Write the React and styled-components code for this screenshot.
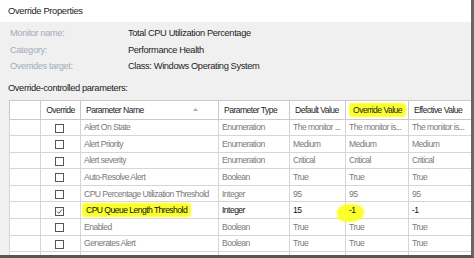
import React from "react";
import styled, { createGlobalStyle } from "styled-components";

const Global = createGlobalStyle`
  html, body { margin: 0; padding: 0; background: #fff; }
  body { font-family: "Liberation Sans", Arial, sans-serif; }
`;

const Window = styled.div`
  width: 474px;
  height: 258px;
  box-sizing: border-box;
  border-right: 3px solid #666;
  border-bottom: 3px solid #555;
  display: flex;
  flex-direction: column;
  overflow: hidden;
  background: #f0f0f0;
`;

const TitleBar = styled.div`
  height: 22px;
  flex: none;
  background: #fff;
  display: flex;
  align-items: center;
  padding: 0 0 2px 8px;
  box-sizing: border-box;
  font-size: 9.4px;
  letter-spacing: -0.35px;
  color: #222;
`;

const Body = styled.div`
  flex: 1;
  display: flex;
  flex-direction: column;
  padding: 3px 0 0 0;
  min-height: 0;
`;

const InfoGrid = styled.div`
  display: grid;
  grid-template-columns: 118px 1fr;
  grid-auto-rows: 16.5px;
  padding-left: 10px;
  align-items: center;
  font-size: 9.3px;
  letter-spacing: -0.38px;
`;

const Label = styled.div`
  color: #a3adbb;
`;

const Value = styled.div`
  color: #1e1e1e;
`;

const Section = styled.div`
  padding: 8px 0 0 8px;
  height: 22px;
  box-sizing: border-box;
  font-size: 9.3px;
  letter-spacing: -0.38px;
  color: #222;
  flex: none;
`;

const TableWrap = styled.div`
  margin: 3px 0 0 9px;
  width: 462px;
  flex: 1;
  min-height: 0;
  overflow: hidden;
`;

const Table = styled.table`
  border-collapse: collapse;
  table-layout: fixed;
  width: 462px;
  background: #fff;
  font-size: 8.6px;
  letter-spacing: -0.55px;
`;

const HeadCell = styled.th`
  height: 19px;
  padding: 0 0 0 ${(p) => (p.$center ? 0 : 5)}px;
  border: 1px solid #c9c9c9;
  font-weight: normal;
  color: #1e1e1e;
  text-align: ${(p) => (p.$center ? "center" : "left")};
  white-space: nowrap;
  box-sizing: border-box;
`;

const HeadInner = styled.div`
  display: flex;
  align-items: center;
  justify-content: space-between;
  padding-right: 20px;
`;

const Row = styled.tr`
  height: 16.6px;
  color: ${(p) => (p.$active ? "#111" : "#7a7a7a")};
`;

const Cell = styled.td`
  padding: 0 0 0 ${(p) => (p.$center ? 0 : 3)}px;
  border: 1px solid #d6d6d6;
  text-align: ${(p) => (p.$center ? "center" : "left")};
  white-space: nowrap;
  overflow: visible;
  box-sizing: border-box;
  line-height: 14px;
`;

const Marker = styled.span`
  background: #fbff2e;
  box-shadow: 0 0 2px 1px #fbff2e;
  border-radius: 2px;
  padding: ${(p) => p.$pad || "1px 2px"};
  margin-left: ${(p) => p.$ml || "0"};
`;

const Blob = styled.span`
  position: relative;
  display: inline-block;
  &::before {
    content: "";
    position: absolute;
    left: -11px;
    top: 2px;
    width: 25px;
    height: 16px;
    background: #fbff2e;
    border-radius: 45% 40% 50% 35%;
    box-shadow: 0 0 2px 1px #fbff2e;
    z-index: 0;
  }
  span {
    position: relative;
    z-index: 1;
  }
`;

const Box = styled.span`
  display: inline-block;
  width: 9px;
  height: 9px;
  box-sizing: border-box;
  border: 1px solid #555;
  background: #fff;
  vertical-align: middle;
  margin-left: -2px;
  position: relative;
  svg { position: absolute; left: 0; top: 0; }
`;

const Check = ({ checked }) => (
  <Box>
    {checked && (
      <svg width="7" height="7" viewBox="0 0 7 7">
        <path d="M1 3.5 L2.8 5.3 L6 1.5" fill="none" stroke="#555" strokeWidth="1" />
      </svg>
    )}
  </Box>
);

const rows = [
  ["Alert On State", "Enumeration", "The monitor ...", "The monitor is...", "The monitor is..."],
  ["Alert Priority", "Enumeration", "Medium", "Medium", "Medium"],
  ["Alert severity", "Enumeration", "Critical", "Critical", "Critical"],
  ["Auto-Resolve Alert", "Boolean", "True", "True", "True"],
  ["CPU Percentage Utilization Threshold", "Integer", "95", "95", "95"],
  ["CPU Queue Length Threshold", "Integer", "15", "-1", "-1", true],
  ["Enabled", "Boolean", "True", "True", "True"],
  ["Generates Alert", "Boolean", "True", "True", "True"],
  ["", "", "", "", ""],
];

export default function App() {
  return (
    <>
      <Global />
      <Window>
        <TitleBar>Override Properties</TitleBar>
        <Body>
          <InfoGrid>
            <Label>Monitor name:</Label>
            <Value>Total CPU Utilization Percentage</Value>
            <Label>Category:</Label>
            <Value>Performance Health</Value>
            <Label>Overrides target:</Label>
            <Value>Class: Windows Operating System</Value>
          </InfoGrid>
          <Section>Override-controlled parameters:</Section>
          <TableWrap>
            <Table>
              <colgroup>
                <col style={{ width: 31 }} />
                <col style={{ width: 40 }} />
                <col style={{ width: 138 }} />
                <col style={{ width: 71 }} />
                <col style={{ width: 56 }} />
                <col style={{ width: 63 }} />
                <col style={{ width: 63 }} />
              </colgroup>
              <thead>
                <tr>
                  <HeadCell />
                  <HeadCell $center>Override</HeadCell>
                  <HeadCell>
                    <HeadInner>
                      Parameter Name
                      <svg width="5" height="3" viewBox="0 0 5 3">
                        <path d="M0 3 L2.5 0 L5 3 Z" fill="#aaa" />
                      </svg>
                    </HeadInner>
                  </HeadCell>
                  <HeadCell>Parameter Type</HeadCell>
                  <HeadCell>Default Value</HeadCell>
                  <HeadCell>
                    <Marker $pad="1px 3px" $ml="-1px">Override Value</Marker>
                  </HeadCell>
                  <HeadCell>Effective Value</HeadCell>
                </tr>
              </thead>
              <tbody>
                {rows.map(([name, type, def, ov, eff, active], i) => (
                  <Row key={i} $active={active}>
                    <Cell />
                    <Cell $center>
                      <Check checked={active} />
                    </Cell>
                    <Cell>
                      {active ? <Marker $pad="1px 3px" $ml="-1px">{name}</Marker> : name}
                    </Cell>
                    <Cell>{type}</Cell>
                    <Cell>{def}</Cell>
                    <Cell>
                      {active ? (
                        <Blob>
                          <span>{ov}</span>
                        </Blob>
                      ) : (
                        ov
                      )}
                    </Cell>
                    <Cell>{eff}</Cell>
                  </Row>
                ))}
              </tbody>
            </Table>
          </TableWrap>
        </Body>
      </Window>
    </>
  );
}
